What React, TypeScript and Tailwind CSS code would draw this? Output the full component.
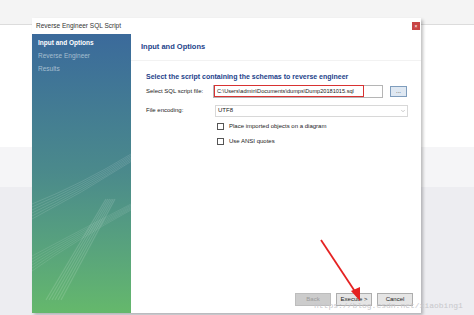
import { ChevronDown } from "lucide-react";

const steps: { name: string; active: boolean }[] = [
  { name: "Input and Options", active: true },
  { name: "Reverse Engineer", active: false },
  { name: "Results", active: false },
];

function SidebarLines() {
  // decorative cable strands on the wizard sidebar
  const strands = [0, 3, 6, 9, 12, 15];
  return (
    <svg width="99" height="278" viewBox="0 0 99 278" className="absolute left-0 top-0">
      {strands.map((o) => (
        <path key={`a${o}`} d={`M0 ${170 + o} Q50 ${150 + o * 0.6} 99 ${120 + o * 0.5}`} stroke="#ffffff" strokeOpacity="0.16" fill="none" strokeWidth="0.8" />
      ))}
      {strands.map((o) => (
        <path key={`b${o}`} d={`M0 ${222 + o} Q45 ${198 + o * 0.5} 99 ${170 + o * 0.4}`} stroke="#ffffff" strokeOpacity="0.13" fill="none" strokeWidth="0.8" />
      ))}
      {strands.map((o) => (
        <path key={`c${o}`} d={`M${14 + o} 266 L${74 + o * 0.6} 165`} stroke="#ffffff" strokeOpacity="0.14" fill="none" strokeWidth="1.2" />
      ))}
    </svg>
  );
}

export default function App() {
  return (
    <div className="relative w-[474px] h-[315px] overflow-hidden bg-white text-[6px] text-[#222]" style={{ fontFamily: '"Liberation Sans", Arial, sans-serif' }}>
      {/* page behind the dialog */}
      <div className="flex flex-col h-full">
        <div className="h-[25px] bg-[#f4f4f4] border-b border-[#dcdcdc]" />
        <div className="h-[122px] bg-white" />
        <div className="h-[40px] bg-[#f5f5f7]" />
        <div className="flex-1 bg-[#ededf1]" />
      </div>

      {/* dialog window */}
      <div className="absolute left-[32px] top-[18px] w-[389px] h-[295px] bg-white flex flex-col shadow-[2px_2px_3px_rgba(0,0,0,0.25)]">
        <div className="h-[16px] flex items-center justify-between pl-[4px] pr-[1px]">
          <span className="text-[6.5px] text-[#333]">Reverse Engineer SQL Script</span>
          <div className="w-[8px] h-[8px] bg-[#c84444] flex items-center justify-center">
            <span className="text-white text-[5px] leading-none">×</span>
          </div>
        </div>
        <div className="flex-1 flex">
          <div className="relative w-[99px] bg-gradient-to-b from-[#3b6a9b] via-[#4b8a8b] to-[#65b86b] overflow-hidden">
            <SidebarLines />
            <div className="relative flex flex-col gap-[4px] pl-[6px] pt-[4px] leading-[9px]">
              {steps.map((s) => (
                <span key={s.name} className={s.active ? "font-bold text-white text-[6.5px]" : "text-[#a6bfd0] text-[6.5px]"}>
                  {s.name}
                </span>
              ))}
            </div>
          </div>

          <div className="flex-1 flex flex-col">
            <div className="h-[27px] flex items-center pl-[10px] border-b border-[#f2f2f2]">
              <span className="font-bold text-[7.5px] text-[#23428a]">Input and Options</span>
            </div>
            <div className="pl-[15px] pt-[11px] flex flex-col">
              <span className="font-bold text-[7px] text-[#23428a]">Select the script containing the schemas to reverse engineer</span>
              <div className="flex items-center mt-[2px]">
                <span className="w-[67px]">Select SQL script file:</span>
                <div className="w-[170px] h-[13px] border border-[#b5b5b5] flex items-center">
                  <div className="w-[150px] h-[12px] border border-[#d83232] flex items-center pl-[2px] text-[5.6px] whitespace-nowrap overflow-hidden">
                    C:\Users\admin\Documents\dumps\Dump20181015.sql
                  </div>
                </div>
                <div className="ml-[7px] w-[17px] h-[11px] bg-[#dfe8f2] border border-[#7f9dbd] flex items-center justify-center text-[6px] leading-none">...</div>
              </div>
              <div className="flex items-center mt-[7px]">
                <span className="w-[69px]">File encoding:</span>
                <div className="w-[193px] h-[12px] border border-[#d8d8d8] flex items-center justify-between pl-[2px] pr-[1px]">
                  <span>UTF8</span>
                  <ChevronDown size={6} className="text-[#999]" />
                </div>
              </div>
              <div className="flex items-center gap-[5px] ml-[71px] mt-[5px]">
                <div className="w-[7px] h-[7px] border border-[#555] bg-white" />
                <span>Place imported objects on a diagram</span>
              </div>
              <div className="flex items-center gap-[5px] ml-[71px] mt-[6px]">
                <div className="w-[7px] h-[7px] border border-[#555] bg-white" />
                <span>Use ANSI quotes</span>
              </div>
            </div>
            <div className="flex-1" />
            <div className="flex justify-end gap-[5px] pr-[8px] pb-[7px]">
              <div className="w-[36px] h-[13px] bg-[#cccccc] border border-[#bdbdbd] flex items-center justify-center text-[#9a9a9a]">Back</div>
              <div className="w-[36px] h-[13px] bg-[#e5e5e5] border border-[#adadad] flex items-center justify-center">Execute &gt;</div>
              <div className="w-[36px] h-[13px] bg-[#e5e5e5] border border-[#adadad] flex items-center justify-center">Cancel</div>
            </div>
          </div>
        </div>
      </div>

      {/* watermark */}
      <span className="absolute left-[314px] top-[302px] text-[8px] leading-none text-[#c8c8cc]" style={{ fontFamily: '"Liberation Mono", monospace' }}>
        https://blog.csdn.net/xiaobing1
      </span>

      {/* red annotation arrow */}
      <svg width="474" height="315" className="absolute left-0 top-0 pointer-events-none">
        <line x1="321" y1="240" x2="356" y2="293" stroke="#e52222" strokeWidth="1.8" />
        <polygon points="360,301 351,291 360,287" fill="#e52222" />
      </svg>
    </div>
  );
}
